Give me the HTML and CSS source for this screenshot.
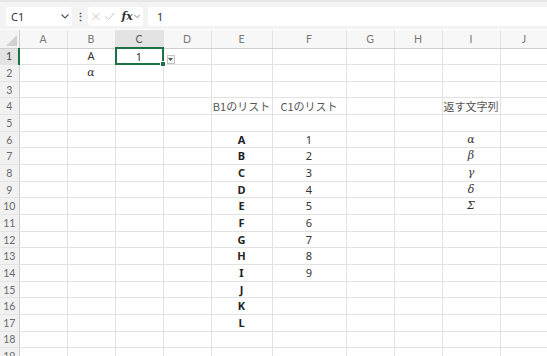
FILE: index.html
```html
<!DOCTYPE html>
<html lang="ja">
<head>
<meta charset="utf-8">
<link rel="stylesheet" href="styles.css">
</head>
<body>
<div class="toolbar">
  <div class="namebox">
    <span class="nb-text">C1</span>
    <svg class="chev" width="8" height="5" viewBox="0 0 8 5"><polyline points="0.5,0.5 4,4 7.5,0.5" fill="none" stroke="#555" stroke-width="1.1"/></svg>
  </div>
  <div class="dots">⋮</div>
  <div class="fxbox">
    <svg width="9" height="9" viewBox="0 0 9 9"><path d="M0.5 0.5 L8.5 8.5 M8.5 0.5 L0.5 8.5" stroke="#b9b9b9" stroke-width="1"/></svg>
    <svg width="11" height="9" viewBox="0 0 11 9"><polyline points="0.5,4.5 4,8 10.5,0.5" fill="none" stroke="#b9b9b9" stroke-width="1"/></svg>
    <span class="fx">fx</span>
    <svg width="7" height="5" viewBox="0 0 7 5"><polyline points="0.5,0.8 3.5,3.8 6.5,0.8" fill="none" stroke="#777" stroke-width="1"/></svg>
  </div>
  <div class="formula">1</div>
</div>
<table class="sheet">
  <colgroup>
    <col class="w-rh"><col class="w48"><col class="w48"><col class="w48"><col class="w48"><col class="w61"><col class="w74"><col class="w48"><col class="w48"><col class="w58"><col class="w48">
  </colgroup>
  <tr class="hdr">
    <th class="corner"><span class="tri"></span></th><th>A</th><th>B</th><th class="hsel">C</th><th>D</th><th>E</th><th>F</th><th>G</th><th>H</th><th>I</th><th>J</th>
  </tr>
  <tr><th class="rsel">1</th><td></td><td class="t">A</td><td class="t selcell">1<span class="sel"><span class="handle"></span></span><span class="dd"><svg width="5" height="3" viewBox="0 0 5 3"><polygon points="0,0 5,0 2.5,3" fill="#555"/></svg></span></td><td></td><td></td><td></td><td></td><td></td><td></td><td></td></tr>
  <tr><th>2</th><td></td><td class="g">α</td><td></td><td></td><td></td><td></td><td></td><td></td><td></td><td></td></tr>
  <tr><th>3</th><td></td><td></td><td></td><td></td><td></td><td></td><td></td><td></td><td></td><td></td></tr>
  <tr><th>4</th><td></td><td></td><td></td><td></td><td class="jh">B1のリスト</td><td class="jh">C1のリスト</td><td></td><td></td><td class="jh">返す文字列</td><td></td></tr>
  <tr><th>5</th><td></td><td></td><td></td><td></td><td></td><td></td><td></td><td></td><td></td><td></td></tr>
  <tr><th>6</th><td></td><td></td><td></td><td></td><td class="b">A</td><td class="n">1</td><td></td><td></td><td class="g">α</td><td></td></tr>
  <tr><th>7</th><td></td><td></td><td></td><td></td><td class="b">B</td><td class="n">2</td><td></td><td></td><td class="g">β</td><td></td></tr>
  <tr><th>8</th><td></td><td></td><td></td><td></td><td class="b">C</td><td class="n">3</td><td></td><td></td><td class="g">γ</td><td></td></tr>
  <tr><th>9</th><td></td><td></td><td></td><td></td><td class="b">D</td><td class="n">4</td><td></td><td></td><td class="g">δ</td><td></td></tr>
  <tr><th>10</th><td></td><td></td><td></td><td></td><td class="b">E</td><td class="n">5</td><td></td><td></td><td class="g">Σ</td><td></td></tr>
  <tr><th>11</th><td></td><td></td><td></td><td></td><td class="b">F</td><td class="n">6</td><td></td><td></td><td></td><td></td></tr>
  <tr><th>12</th><td></td><td></td><td></td><td></td><td class="b">G</td><td class="n">7</td><td></td><td></td><td></td><td></td></tr>
  <tr><th>13</th><td></td><td></td><td></td><td></td><td class="b">H</td><td class="n">8</td><td></td><td></td><td></td><td></td></tr>
  <tr><th>14</th><td></td><td></td><td></td><td></td><td class="b">I</td><td class="n">9</td><td></td><td></td><td></td><td></td></tr>
  <tr><th>15</th><td></td><td></td><td></td><td></td><td class="b">J</td><td></td><td></td><td></td><td></td><td></td></tr>
  <tr><th>16</th><td></td><td></td><td></td><td></td><td class="b">K</td><td></td><td></td><td></td><td></td><td></td></tr>
  <tr><th>17</th><td></td><td></td><td></td><td></td><td class="b">L</td><td></td><td></td><td></td><td></td><td></td></tr>
  <tr><th>18</th><td></td><td></td><td></td><td></td><td></td><td></td><td></td><td></td><td></td><td></td></tr>
  <tr><th>19</th><td></td><td></td><td></td><td></td><td></td><td></td><td></td><td></td><td></td><td></td></tr>
</table>
</body>
</html>
```
FILE: styles.css
```css
html, body {
  margin: 0;
  padding: 0;
  background: #ffffff;
  overflow: hidden;
  width: 547px;
  height: 356px;
}
body {
  font-family: "Noto Sans", "Noto Sans CJK JP", sans-serif;
  color: #222;
}
.toolbar {
  height: 29px;
  box-sizing: border-box;
  background: #f3f3f3;
  border-top: 2px solid #e6e6e6;
  padding-top: 5px;
  display: flex;
  align-items: flex-start;
  width: 547px;
  overflow: hidden;
}
.namebox {
  margin-left: 6px;
  width: 66px;
  height: 19px;
  box-sizing: border-box;
  background: #fff;
  border-radius: 3px;
  display: flex;
  align-items: center;
  justify-content: space-between;
  padding: 0 3px 0 5px;
}
.nb-text {
  font-size: 11px;
  color: #333;
}
.dots {
  width: 16px;
  text-align: center;
  font-size: 11px;
  line-height: 19px;
  color: #555;
  font-weight: bold;
}
.fxbox {
  width: 55px;
  height: 19px;
  box-sizing: border-box;
  background: #fff;
  border-radius: 3px;
  display: flex;
  align-items: center;
  padding: 0 3px 0 4px;
  gap: 5px;
}
.fx {
  font-family: "DejaVu Serif", "Liberation Serif", serif;
  font-style: italic;
  font-weight: bold;
  font-size: 11px;
  color: #333;
  margin-left: 2px;
  margin-right: -4px;
}
.formula {
  flex: 1;
  margin-left: 5px;
  height: 19px;
  background: #fff;
  border-radius: 3px 0 0 3px;
  font-size: 11px;
  line-height: 19px;
  padding-left: 9px;
  color: #333;
}
.sheet {
  table-layout: fixed;
  border-collapse: collapse;
  width: 548px;
  margin-top: 1px;
}
.w-rh { width: 19px; }
.w48 { width: 48px; }
.w61 { width: 61px; }
.w74 { width: 74px; }
.w58 { width: 58px; }
.sheet tr { height: 16.67px; }
.sheet tr.hdr { height: 18px; }
.sheet td {
  border: 1px solid #e2e2e2;
  padding: 0;
  text-align: center;
  vertical-align: middle;
  font-size: 11px;
  line-height: 14px;
  white-space: nowrap;
  overflow: visible;
}
.sheet th {
  font-weight: normal;
  color: #6a6a6a;
  font-size: 10.5px;
  padding: 0;
  text-align: center;
  vertical-align: middle;
  white-space: nowrap;
}
.hdr th {
  background: #f7f7f7;
  border-right: 1px solid #e2e2e2;
  border-bottom: 1px solid #cfcfcf;
  font-family: "Lato", "Noto Sans", sans-serif;
  font-size: 10.5px;
  color: #777;
}
.sheet tr:not(.hdr) th {
  background: #f1f1f1;
  border-right: 1px solid #cdcdcd;
  border-bottom: 1px solid #e4e4e4;
  font-family: "Lato", "Noto Sans", sans-serif;
}
.hdr th.corner {
  background: #f3f3f3;
  position: relative;
  border-right: 1px solid #cdcdcd;
}
.tri {
  position: absolute;
  right: 2px;
  bottom: 2px;
  width: 0;
  height: 0;
  border-left: 11px solid transparent;
  border-bottom: 11px solid #d0d0d0;
}
.hdr th.hsel {
  background: #e3e3e3;
  border-bottom: 2px solid #1e7145;
  color: #555;
}
.sheet tr:not(.hdr) th.rsel {
  background: #e3e3e3;
  border-right: 2px solid #1e7145;
  color: #444;
}
.t { color: #333; }
.selcell { position: relative; }
.sel {
  position: absolute;
  left: -1px;
  top: -2px;
  right: -1px;
  bottom: -1px;
  border: 2px solid #1e7145;
  box-sizing: border-box;
}
.handle {
  position: absolute;
  right: -4px;
  bottom: -4px;
  width: 4px;
  height: 4px;
  background: #1e7145;
  border: 1px solid #fff;
}
.dd {
  position: absolute;
  left: 51px;
  top: 6px;
  width: 8px;
  height: 9px;
  box-sizing: border-box;
  background: #f6f6f6;
  border: 1px solid #c4c4c4;
  display: flex;
  align-items: center;
  justify-content: center;
}
.dd svg { display: block; }
.g {
  font-family: "DejaVu Serif", "Liberation Serif", serif;
  font-style: italic;
  font-size: 14px;
  color: #333;
}
.jh {
  font-family: "Noto Sans CJK JP", sans-serif;
  font-size: 9.6px;
  color: #555;
}
.b {
  font-weight: bold;
  font-size: 12px;
  color: #222;
}
.n {
  font-size: 12px;
  color: #333;
}
```
